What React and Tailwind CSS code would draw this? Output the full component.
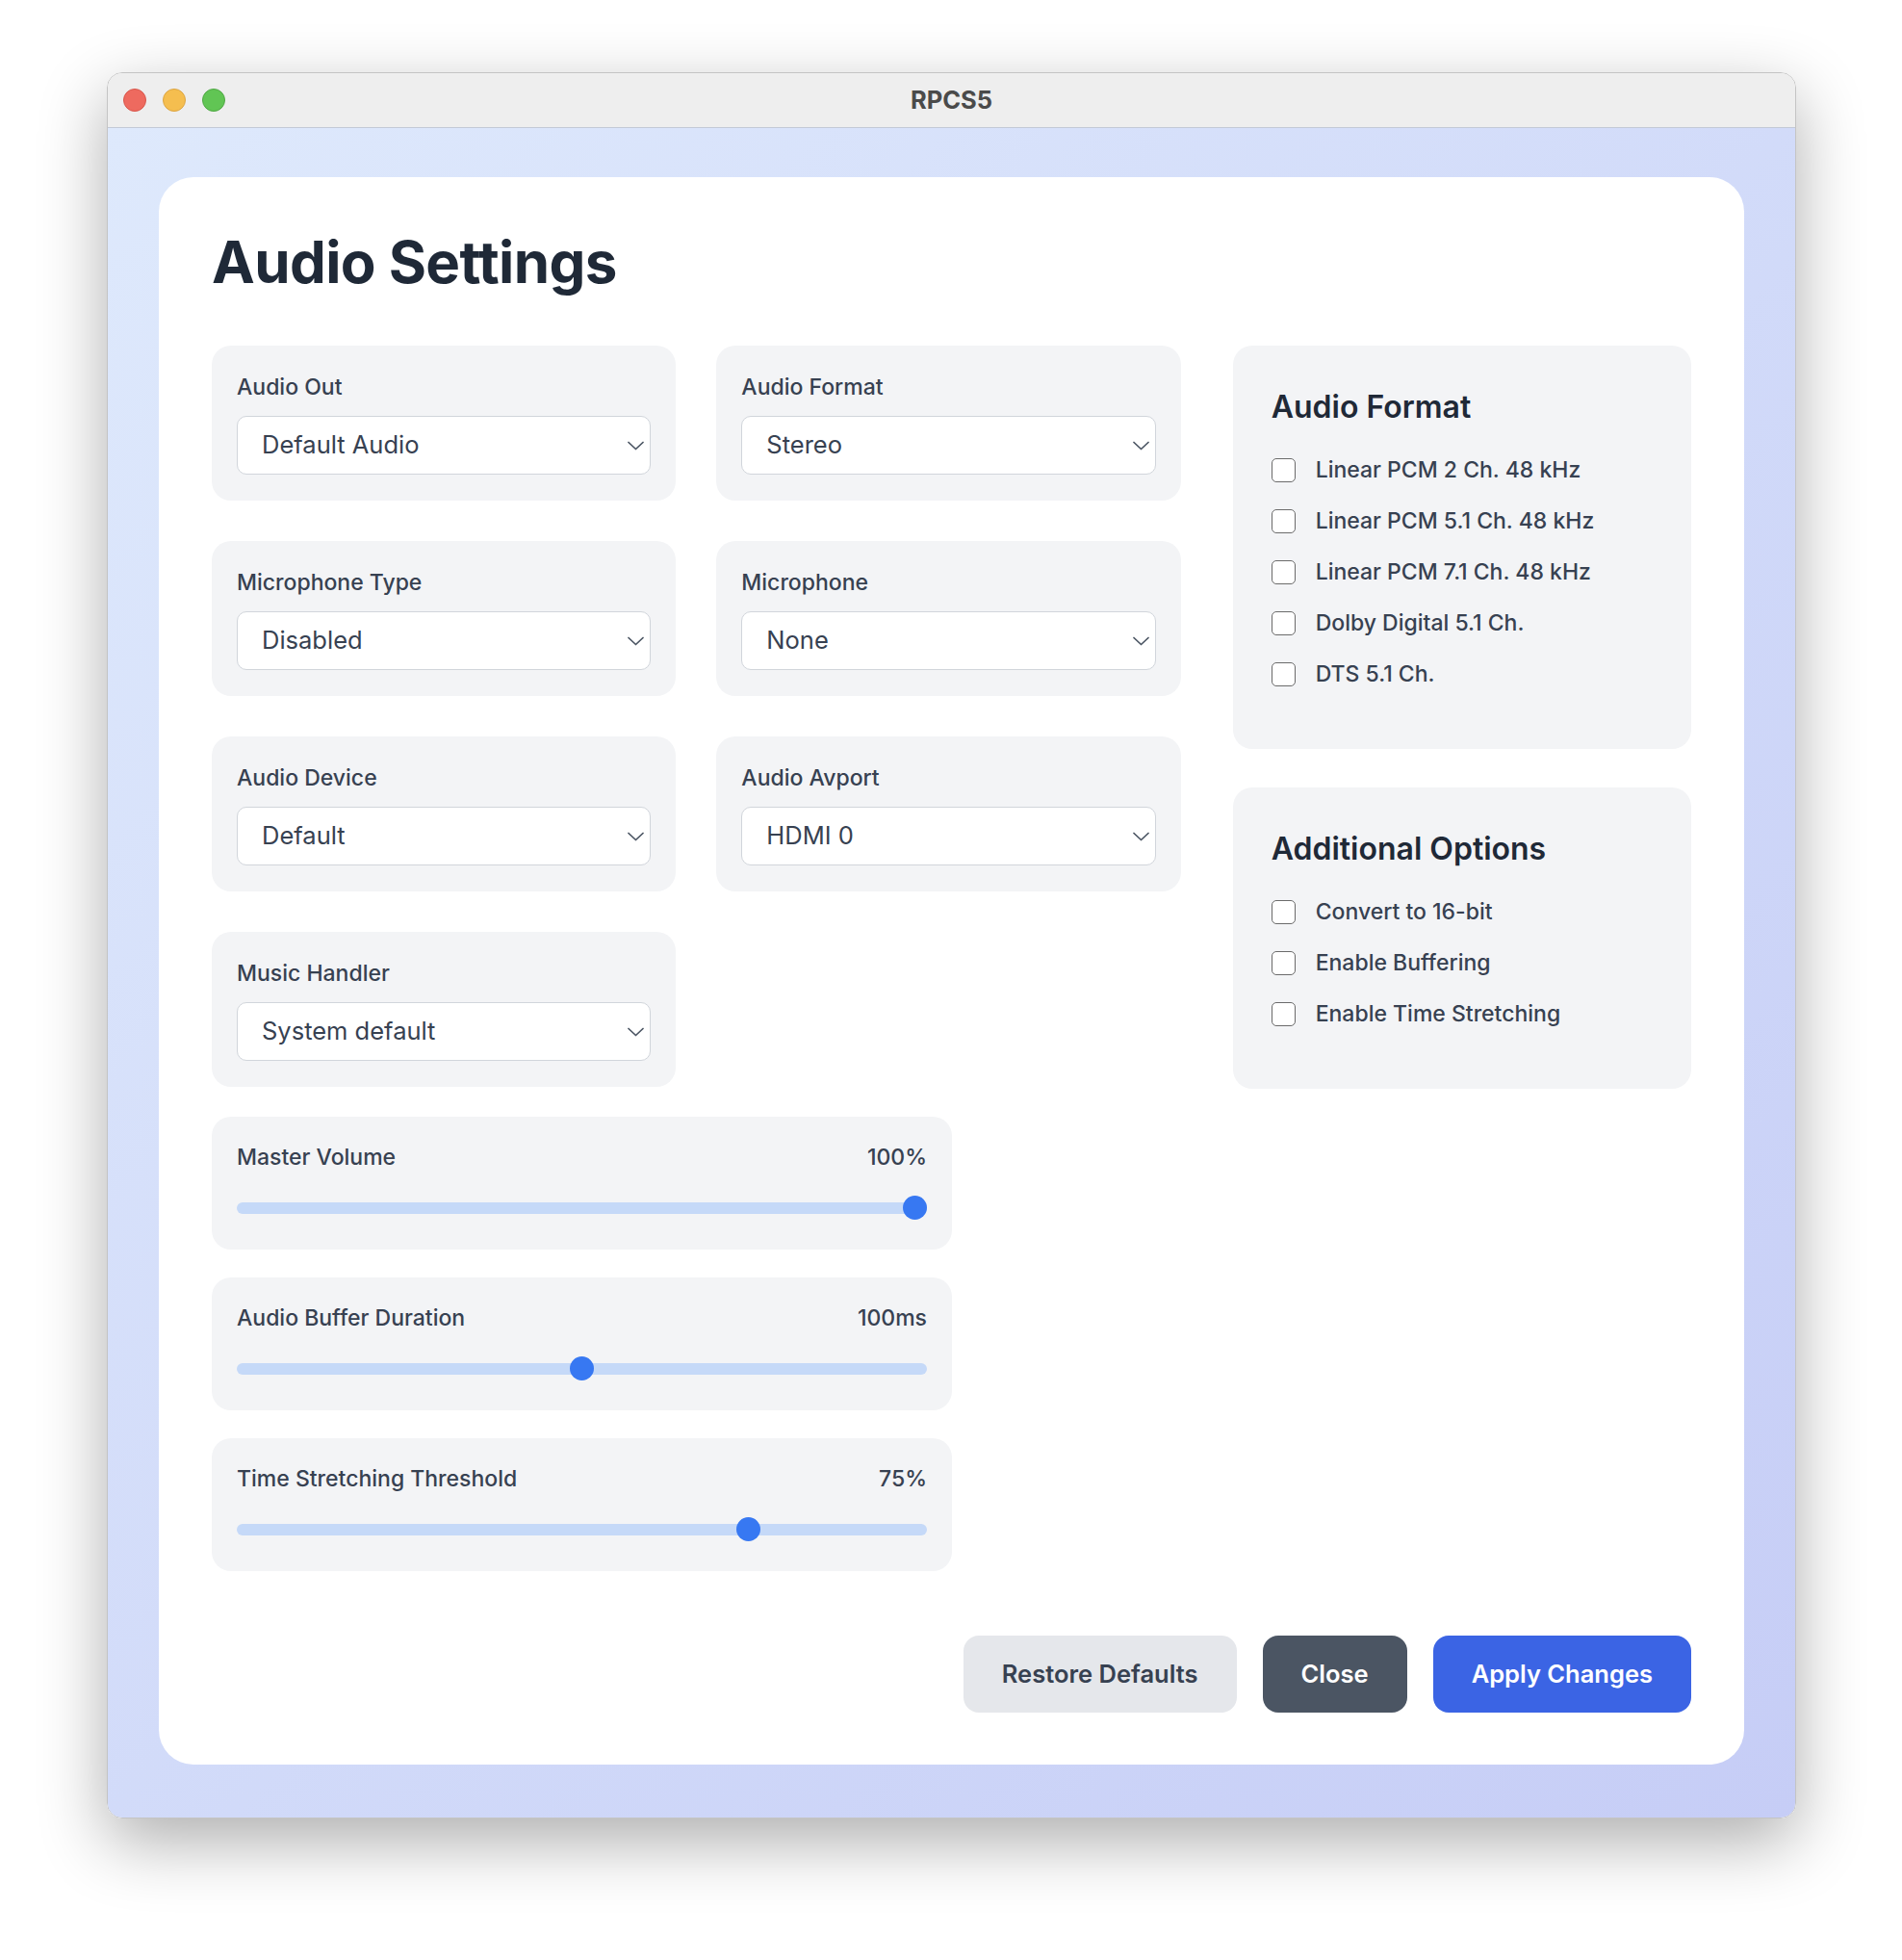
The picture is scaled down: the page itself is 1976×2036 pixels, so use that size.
import React from 'react';

const selects = [
    { label: 'Audio Out', value: 'Default Audio', options: ['Default Audio', 'Null', 'Cubeb'] },
    { label: 'Audio Format', value: 'Stereo', options: ['Stereo', 'Surround 5.1', 'Surround 7.1'] },
    { label: 'Microphone Type', value: 'Disabled', options: ['Disabled', 'Standard', 'SingStar'] },
    { label: 'Microphone', value: 'None', options: ['None'] },
    { label: 'Audio Device', value: 'Default', options: ['Default'] },
    { label: 'Audio Avport', value: 'HDMI 0', options: ['HDMI 0', 'HDMI 1', 'AV Multi'] },
    { label: 'Music Handler', value: 'System default', options: ['System default', 'Null'] },
];

const sliders = [
    { label: 'Master Volume', display: '100%', percent: 100 },
    { label: 'Audio Buffer Duration', display: '100ms', percent: 50 },
    { label: 'Time Stretching Threshold', display: '75%', percent: 75 },
];

const formats = [
    'Linear PCM 2 Ch. 48 kHz',
    'Linear PCM 5.1 Ch. 48 kHz',
    'Linear PCM 7.1 Ch. 48 kHz',
    'Dolby Digital 5.1 Ch.',
    'DTS 5.1 Ch.',
];

const extras = ['Convert to 16-bit', 'Enable Buffering', 'Enable Time Stretching'];

function SelectCard({ label, value, options }) {
    return (
        <div className="rounded-[20px] bg-[#f3f4f6] px-[26px] pt-[28px] pb-[27px]">
            <label className="block text-[23px] leading-[30px] font-medium text-[#374151]">{label}</label>
            <div className="relative mt-[15px]">
                <select
                    defaultValue={value}
                    className="block h-[61px] w-full appearance-none rounded-[10px] border border-[#d1d5db] bg-white pl-[25px] text-[25.5px] text-[#374151] outline-none"
                >
                    {options.map((o) => (
                        <option key={o}>{o}</option>
                    ))}
                </select>
                {/* chevron */}
                <svg
                    className="pointer-events-none absolute right-[7px] top-1/2 -translate-y-1/2"
                    width="17"
                    height="10"
                    viewBox="0 0 17 10"
                    fill="none"
                >
                    <path d="M1 1.5l7.5 7 7.5-7" stroke="#4b5563" strokeWidth="1.7" strokeLinecap="round" strokeLinejoin="round" />
                </svg>
            </div>
        </div>
    );
}

function SliderCard({ label, display, percent }) {
    return (
        <div className="rounded-[20px] bg-[#f3f4f6] px-[26px] pt-[27px] pb-[31px]">
            <div className="flex h-[30px] items-center justify-between text-[23px] font-medium text-[#374151]">
                <span>{label}</span>
                <span>{display}</span>
            </div>
            <div className="relative mt-[25px] flex h-[25px] items-center">
                <div className="h-[12px] w-full rounded-full bg-[#c5d9f8]" />
                <div
                    className="absolute top-0 h-[25px] w-[25px] rounded-full bg-[#3778f2]"
                    style={{ left: `calc(${percent}% - ${percent * 0.25}px)` }}
                />
            </div>
        </div>
    );
}

function CheckPanel({ title, items }) {
    return (
        <div className="rounded-[20px] bg-[#f3f4f6] px-[40px] pt-[44px] pb-[62px]">
            <h2 className="text-[32px] leading-[40px] font-semibold text-[#1f2937]">{title}</h2>
            <div className="mt-[29px] flex flex-col gap-[21px]">
                {items.map((item) => (
                    <label key={item} className="flex h-[32px] items-center gap-[21px] text-[23px] font-medium text-[#374151]">
                        <input
                            type="checkbox"
                            className="h-[25px] w-[25px] shrink-0 appearance-none rounded-[5px] border-[1.5px] border-[#6b6b6b] bg-white"
                        />
                        <span>{item}</span>
                    </label>
                ))}
            </div>
        </div>
    );
}

export default function App() {
    return (
        <div className="min-h-screen bg-white pt-[75px] pb-[147px] font-['Inter','Liberation_Sans',sans-serif]">
            <div className="ml-[111px] w-[1755px] overflow-hidden rounded-[16px] border border-[#c4c4c4] shadow-[0_24px_70px_rgba(0,0,0,0.32)]">
                {/* Title bar */}
                <div className="grid h-[57px] grid-cols-[1fr_auto_1fr] items-center border-b border-[#c3c9d6] bg-[#eeeeee]">
                    <div className="flex items-center gap-[17px] pl-[16px]">
                        <span className="h-[24px] w-[24px] rounded-full border border-[#d8574c] bg-[#ee6a5f]" />
                        <span className="h-[24px] w-[24px] rounded-full border border-[#dca543] bg-[#f5be4f]" />
                        <span className="h-[24px] w-[24px] rounded-full border border-[#50a845] bg-[#61c554]" />
                    </div>
                    <div className="text-[25.5px] font-bold text-[#4a4a4a]">RPCS5</div>
                    <div />
                </div>

                {/* Content */}
                <div className="bg-linear-to-br from-[#dee9fc] to-[#c6cdf6] px-[53px] pt-[51px] pb-[55px]">
                    <div className="rounded-[36px] bg-white px-[55px] pt-[58px] pb-[54px]">
                        <h1 className="text-[60px] leading-[60px] font-bold tracking-[-0.01em] text-[#1f2937]">Audio Settings</h1>

                        <div className="mt-[57px] grid grid-cols-3 gap-x-[54px]">
                            <div className="col-span-2">
                                <div className="grid grid-cols-2 gap-[42px]">
                                    {selects.map((s) => (
                                        <SelectCard key={s.label} {...s} />
                                    ))}
                                </div>
                                <div className="mt-[31px] flex w-[769px] flex-col gap-[29px]">
                                    {sliders.map((s) => (
                                        <SliderCard key={s.label} {...s} />
                                    ))}
                                </div>
                            </div>

                            <div className="flex flex-col gap-[40px]">
                                <CheckPanel title="Audio Format" items={formats} />
                                <CheckPanel title="Additional Options" items={extras} />
                            </div>
                        </div>

                        <div className="mt-[67px] flex justify-end gap-[27px]">
                            <button className="h-[80px] rounded-[16px] bg-[#e5e7eb] px-10 text-[25.5px] font-semibold text-[#374151]">
                                Restore Defaults
                            </button>
                            <button className="h-[80px] rounded-[16px] bg-[#4b5563] px-10 text-[25.5px] font-semibold text-white">
                                Close
                            </button>
                            <button className="h-[80px] rounded-[16px] bg-[#3b64e4] px-10 text-[25.5px] font-semibold text-white">
                                Apply Changes
                            </button>
                        </div>
                    </div>
                </div>
            </div>
        </div>
    );
}
